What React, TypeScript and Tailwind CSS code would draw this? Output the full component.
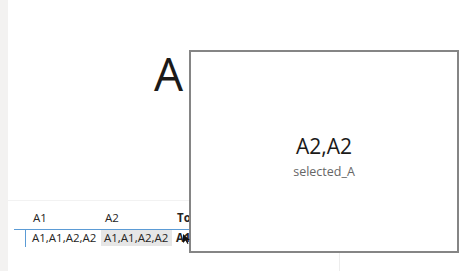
export default function App() {
    return (
        <div
            className="relative w-[474px] h-[271px] bg-white overflow-hidden flex"
            style={{ fontFamily: '"Open Sans", "Noto Sans", sans-serif' }}
        >
            {/* left rail */}
            <div className="w-[8px] h-full bg-[#f3f2f1] shrink-0" />

            <div className="flex-1 flex flex-col">
                {/* card visual */}
                <div className="h-[200px] flex items-start pl-[146px] pt-[50px]">
                    <span className="text-[46px] leading-none text-[#1b1a19]">A</span>
                </div>

                {/* table visual */}
                <div className="w-[330px] border-t border-[#f2f2f2] pt-[6px] text-[11.5px] text-[#252423]">
                    <div className="flex h-[22px] items-center pl-[25px]">
                        <span className="w-[72px]">A1</span>
                        <span className="w-[72px]">A2</span>
                        <span className="font-bold">Total</span>
                    </div>
                    <div className="ml-[6px] border-t border-[#5b9bd5] flex items-stretch">
                        <div className="w-[12px] border-r border-[#5b9bd5] h-[17px]" />
                        <div className="flex items-center h-[16px] pl-[6px] w-[75px]">A1,A1,A2,A2</div>
                        <div className="flex items-center h-[16px] px-[3px] bg-[#e6e6e6] w-[71px]">A1,A1,A2,A2</div>
                        <div className="flex items-center h-[16px] pl-[4px] font-bold">A1,A1,A2,A2</div>
                    </div>
                </div>
            </div>

            {/* faint divider below popup */}
            <div className="absolute left-[339px] top-[252px] w-px h-[19px] bg-[#ededed]" />

            {/* tooltip popup */}
            <div className="absolute left-[189px] top-[50px] w-[270px] h-[203px] bg-white border-2 border-[#858585] flex flex-col items-center justify-center pt-[14px]">
                <div className="text-[21px] leading-none text-[#1b1a19]">A2,A2</div>
                <div className="text-[12.5px] text-[#666666] mt-[6px]">selected_A</div>
            </div>

            {/* cursor */}
            <svg className="absolute left-[182px] top-[233px]" width="8" height="12" viewBox="0 0 8 12">
                <path d="M1 1 L1 10 L3.5 7.5 L5.5 11 L6.5 10.5 L4.8 7 L8 7 Z" fill="#111" />
            </svg>
        </div>
    );
}
